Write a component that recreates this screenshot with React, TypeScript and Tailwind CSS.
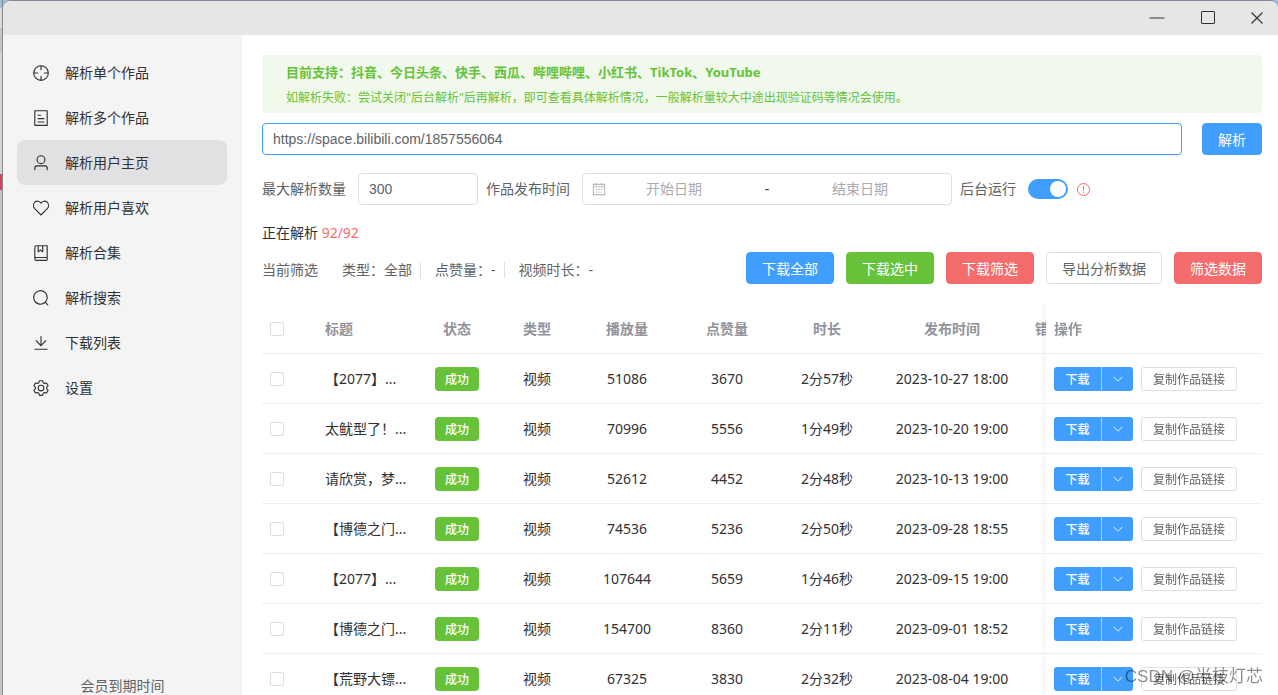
import { useState } from 'react';
import type { ReactNode } from 'react';
import { clsx } from 'clsx';

interface Work {
  title: string;
  plays: number;
  likes: number;
  duration: string;
  publishedAt: string;
}

const works: Work[] = [
  { title: '【2077】...', plays: 51086, likes: 3670, duration: '2分57秒', publishedAt: '2023-10-27 18:00' },
  { title: '太鱿型了！...', plays: 70996, likes: 5556, duration: '1分49秒', publishedAt: '2023-10-20 19:00' },
  { title: '请欣赏，梦...', plays: 52612, likes: 4452, duration: '2分48秒', publishedAt: '2023-10-13 19:00' },
  { title: '【博德之门...', plays: 74536, likes: 5236, duration: '2分50秒', publishedAt: '2023-09-28 18:55' },
  { title: '【2077】...', plays: 107644, likes: 5659, duration: '1分46秒', publishedAt: '2023-09-15 19:00' },
  { title: '【博德之门...', plays: 154700, likes: 8360, duration: '2分11秒', publishedAt: '2023-09-01 18:52' },
  { title: '【荒野大镖...', plays: 67325, likes: 3830, duration: '2分32秒', publishedAt: '2023-08-04 19:00' },
];

const icons = {
  aim: 'M512 896a384 384 0 1 0 0-768 384 384 0 0 0 0 768zm0 64a448 448 0 1 1 0-896 448 448 0 0 1 0 896zM512 96a32 32 0 0 1 32 32v192a32 32 0 0 1-64 0V128a32 32 0 0 1 32-32zm0 576a32 32 0 0 1 32 32v192a32 32 0 1 1-64 0V704a32 32 0 0 1 32-32zM96 512a32 32 0 0 1 32-32h192a32 32 0 0 1 0 64H128a32 32 0 0 1-32-32zm576 0a32 32 0 0 1 32-32h192a32 32 0 1 1 0 64H704a32 32 0 0 1-32-32z',
  tickets:
    'M192 128v768h640V128H192zm-32-64h704a32 32 0 0 1 32 32v832a32 32 0 0 1-32 32H160a32 32 0 0 1-32-32V96a32 32 0 0 1 32-32zm160 448h384v64H320v-64zm0-192h192v64H320v-64zm0 384h384v64H320v-64z',
  user: 'M512 512a192 192 0 1 0 0-384 192 192 0 0 0 0 384zm0 64a256 256 0 1 1 0-512 256 256 0 0 1 0 512zm320 320v-96a96 96 0 0 0-96-96H288a96 96 0 0 0-96 96v96a32 32 0 1 1-64 0v-96a160 160 0 0 1 160-160h448a160 160 0 0 1 160 160v96a32 32 0 1 1-64 0z',
  collection:
    'M192 736h640V128H256a64 64 0 0 0-64 64v544zm64-672h608a32 32 0 0 1 32 32v672a32 32 0 0 1-32 32H160l-32 57.536V192A128 128 0 0 1 256 64zM240 800a48 48 0 1 0 0 96h592v-96H240zm0-64h656v160a64 64 0 0 1-64 64H240a112 112 0 0 1 0-224zm144-608v250.88l96-76.8 96 76.8V128H384zm-64-64h320v381.44a32 32 0 0 1-51.968 24.96L480 384l-108.032 86.4A32 32 0 0 1 320 445.44V64z',
  search:
    'm795.904 750.72 124.992 124.928a32 32 0 0 1-45.248 45.248L750.656 795.904a416 416 0 1 1 45.248-45.248zM480 832a352 352 0 1 0 0-704 352 352 0 0 0 0 704z',
  download:
    'M160 832h704a32 32 0 1 1 0 64H160a32 32 0 1 1 0-64zm384-253.696 236.288-236.352 45.248 45.248L508.8 704 192 387.2l45.248-45.248L480 584.704V128h64v450.304z',
  setting:
    'M600.704 64a32 32 0 0 1 30.464 22.208l35.2 109.376c14.784 7.232 28.928 15.36 42.432 24.512l112.384-24.192a32 32 0 0 1 34.432 15.36L944.32 364.8a32 32 0 0 1-4.032 37.504l-77.12 85.12a357.12 357.12 0 0 1 0 49.024l77.12 85.248a32 32 0 0 1 4.032 37.504l-88.704 153.6a32 32 0 0 1-34.432 15.296L708.8 803.904c-13.44 9.088-27.648 17.28-42.368 24.512l-35.264 109.376A32 32 0 0 1 600.704 960H423.296a32 32 0 0 1-30.464-22.208L357.696 828.48a351.616 351.616 0 0 1-42.56-24.64l-112.32 24.256a32 32 0 0 1-34.432-15.36L79.68 659.2a32 32 0 0 1 4.032-37.504l77.12-85.248a357.12 357.12 0 0 1 0-48.896l-77.12-85.248A32 32 0 0 1 79.68 364.8l88.704-153.6a32 32 0 0 1 34.432-15.296l112.32 24.256c13.568-9.152 27.776-17.408 42.56-24.64l35.2-109.312A32 32 0 0 1 423.232 64H600.64zm-23.424 64H446.72l-36.352 113.088-24.512 11.968a294.113 294.113 0 0 0-34.816 20.096l-22.656 15.36-116.224-25.088-65.28 113.152 79.68 88.192-1.92 27.136a293.12 293.12 0 0 0 0 40.192l1.92 27.136-79.808 88.192 65.344 113.152 116.224-25.024 22.656 15.296a294.113 294.113 0 0 0 34.816 20.096l24.512 11.968L446.72 896h130.688l36.48-113.152 24.448-11.904a288.282 288.282 0 0 0 34.752-20.096l22.592-15.296 116.288 25.024 65.28-113.152-79.744-88.192 1.92-27.136a293.12 293.12 0 0 0 0-40.256l-1.92-27.136 79.808-88.128-65.344-113.152-116.288 24.96-22.592-15.232a287.616 287.616 0 0 0-34.752-20.096l-24.448-11.904L577.344 128zM512 320a192 192 0 1 1 0 384 192 192 0 0 1 0-384zm0 64a128 128 0 1 0 0 256 128 128 0 0 0 0-256z',
  calendar:
    'M128 384v512h768V192H768v32a32 32 0 1 1-64 0v-32H320v32a32 32 0 0 1-64 0v-32H128v128h768v64H128zm192-256h384V96a32 32 0 1 1 64 0v32h160a32 32 0 0 1 32 32v768a32 32 0 0 1-32 32H96a32 32 0 0 1-32-32V160a32 32 0 0 1 32-32h160V96a32 32 0 0 1 64 0v32zm-32 384h64a32 32 0 0 1 0 64h-64a32 32 0 0 1 0-64zm0 192h64a32 32 0 1 1 0 64h-64a32 32 0 1 1 0-64zm192-192h64a32 32 0 0 1 0 64h-64a32 32 0 0 1 0-64zm0 192h64a32 32 0 1 1 0 64h-64a32 32 0 1 1 0-64zm192-192h64a32 32 0 1 1 0 64h-64a32 32 0 1 1 0-64zm0 192h64a32 32 0 1 1 0 64h-64a32 32 0 1 1 0-64z',
  arrowDown:
    'M831.872 340.864 512 652.672 192.128 340.864a30.592 30.592 0 0 0-42.752 0 29.12 29.12 0 0 0 0 41.6L489.664 714.24a32 32 0 0 0 44.672 0l340.288-331.712a29.12 29.12 0 0 0 0-41.728 30.592 30.592 0 0 0-42.752 0z',
};

function Icon({ d, className }: { d: string; className?: string }) {
  return (
    <svg viewBox="0 0 1024 1024" fill="currentColor" className={className} aria-hidden="true">
      <path d={d} />
    </svg>
  );
}

function HeartIcon({ className }: { className?: string }) {
  return (
    <svg viewBox="0 0 18 18" fill="none" stroke="currentColor" strokeWidth="1.1" strokeLinejoin="round" className={className} aria-hidden="true">
      <path d="M9 4.1C7.6 1.9 4.6 1.5 2.8 3.2 1 5 1 7.8 2.7 9.7L9 16l6.3-6.3C17 7.8 17 5 15.2 3.2 13.4 1.5 10.4 1.9 9 4.1z" />
    </svg>
  );
}

const menu: { label: string; icon: ReactNode }[] = [
  { label: '解析单个作品', icon: <Icon d={icons.aim} className="size-[18px]" /> },
  { label: '解析多个作品', icon: <Icon d={icons.tickets} className="size-[18px]" /> },
  { label: '解析用户主页', icon: <Icon d={icons.user} className="size-[18px]" /> },
  { label: '解析用户喜欢', icon: <HeartIcon className="size-[18px]" /> },
  { label: '解析合集', icon: <Icon d={icons.collection} className="size-[18px]" /> },
  { label: '解析搜索', icon: <Icon d={icons.search} className="size-[18px]" /> },
  { label: '下载列表', icon: <Icon d={icons.download} className="size-[18px]" /> },
  { label: '设置', icon: <Icon d={icons.setting} className="size-[18px]" /> },
];

const buttonStyles = {
  primary: 'border-[#409eff] bg-[#409eff] text-white',
  success: 'border-[#67c23a] bg-[#67c23a] text-white',
  danger: 'border-[#f56c6c] bg-[#f56c6c] text-white',
  plain: 'border-[#dcdfe6] bg-white text-[#606266]',
};

function Button({ type = 'plain', children }: { type?: keyof typeof buttonStyles; children: ReactNode }) {
  return (
    <button type="button" className={clsx('h-8 shrink-0 rounded border px-[15px] pt-px text-sm', buttonStyles[type])}>
      {children}
    </button>
  );
}

// Sliver of the desktop that shows beside the window
function DesktopEdge() {
  return (
    <div className="flex w-[3px] shrink-0 flex-col border-r border-[#8b8b8b] bg-[#c3c4c6]" aria-hidden="true">
      <div className="h-2 bg-[#9dbfe2]" />
      <div className="h-5 bg-[#dcdcdc]" />
      <div className="h-6 bg-[#c4c4c4]" />
      <div className="h-[122px] bg-[#d4d4d4]" />
      <div className="h-4 bg-[#d8405f]" />
      <div className="h-8 bg-[#bfc4ca]" />
      <div className="flex-1" />
    </div>
  );
}

function TitleBar() {
  return (
    <header className="flex h-[34px] shrink-0 items-center justify-end bg-[#e6e6e6] text-[#333]">
      <button type="button" aria-label="最小化" className="flex h-full w-[46px] items-center justify-center">
        <svg viewBox="0 0 16 16" className="size-4" stroke="currentColor" fill="none">
          <path d="M.5 8h15" />
        </svg>
      </button>
      <button type="button" aria-label="最大化" className="flex h-full w-14 items-center justify-center">
        <svg viewBox="0 0 16 16" className="size-4" stroke="currentColor" fill="none">
          <rect x="1.5" y="1.5" width="13" height="12" rx="0.5" />
        </svg>
      </button>
      <button type="button" aria-label="关闭" className="flex h-full w-[42px] items-center justify-center">
        <svg viewBox="0 0 16 16" className="size-4" stroke="currentColor" strokeWidth="1.2" fill="none">
          <path d="M2.5 2.500l11 11M13.500 2.500l-11 11" />
        </svg>
      </button>
    </header>
  );
}

function Sidebar() {
  const [active, setActive] = useState('解析用户主页');

  return (
    <aside className="flex w-[239px] shrink-0 flex-col justify-between bg-[#f4f4f4] pt-[15px]">
      <nav className="flex flex-col pr-[15px] pl-[14px]">
        {menu.map((item) => (
          <a
            key={item.label}
            href="#"
            onClick={(e) => {
              e.preventDefault();
              setActive(item.label);
            }}
            className={clsx(
              'flex h-[45px] items-center gap-[15px] rounded-lg px-[15px] text-sm text-[#303133]',
              active === item.label && 'bg-[#e1e1e3]'
            )}
          >
            {item.icon}
            {item.label}
          </a>
        ))}
      </nav>
      <p className="text-center text-sm leading-[18px] text-[#606266]">会员到期时间</p>
    </aside>
  );
}

function SearchForm() {
  const [url, setUrl] = useState('https://space.bilibili.com/1857556064');
  const [limit, setLimit] = useState('300');
  const [background, setBackground] = useState(true);

  return (
    <form className="text-sm text-[#606266]" onSubmit={(e) => e.preventDefault()}>
      <div className="mt-[10px] flex gap-5">
        <input
          type="text"
          aria-label="主页链接"
          value={url}
          onChange={(e) => setUrl(e.target.value)}
          className="h-8 min-w-0 flex-1 rounded border border-[#409eff] px-[10px] font-['Liberation_Sans',sans-serif] outline-none"
        />
        <Button type="primary">解析</Button>
      </div>

      <div className="mt-[18px] flex items-center whitespace-nowrap">
        <label htmlFor="limit">最大解析数量</label>
        <input
          id="limit"
          type="text"
          value={limit}
          onChange={(e) => setLimit(e.target.value)}
          className="mr-2 ml-3 h-8 w-[120px] rounded border border-[#dcdfe6] px-[10px] font-['Liberation_Sans',sans-serif]"
        />
        <label htmlFor="start">作品发布时间</label>
        <div className="mr-2 ml-3 flex h-8 w-[370px] items-center rounded border border-[#dcdfe6] pr-[23px] pl-[9px]">
          <Icon d={icons.calendar} className="size-[14px] text-[#a8abb2]" />
          <input id="start" type="text" placeholder="开始日期" className="w-[136px] text-center placeholder:text-[#a8abb2]" />
          <span className="flex-1 text-center text-[#303133]">-</span>
          <input type="text" aria-label="结束日期" placeholder="结束日期" className="w-[136px] text-center placeholder:text-[#a8abb2]" />
        </div>
        <label htmlFor="background">后台运行</label>
        <input
          id="background"
          type="checkbox"
          role="switch"
          checked={background}
          onChange={(e) => setBackground(e.target.checked)}
          className="mr-2 ml-3 flex h-5 w-10 appearance-none items-center rounded-full bg-[#dcdfe6] px-[2px] before:size-4 before:rounded-full before:bg-white checked:justify-end checked:bg-[#409eff]"
        />
        <svg viewBox="0 0 16 16" fill="none" stroke="#f56c6c" className="size-4">
          <circle cx="7.5" cy="8.5" r="6" />
          <path d="M7.500 5v4.500M7.500 10.700v1.200" />
        </svg>
      </div>
    </form>
  );
}

function Toolbar() {
  return (
    <div className="mt-[9px] flex items-center justify-between whitespace-nowrap">
      <div className="flex items-center pt-1 text-sm text-[#606266]">
        <span className="mr-6">当前筛选</span>
        <span className="border-r border-[#dcdfe6] pr-2 leading-4">类型：全部</span>
        <span className="border-r border-[#dcdfe6] pr-2 pl-[14px] leading-4">点赞量：-</span>
        <span className="pl-[14px] leading-4">视频时长：-</span>
      </div>
      <div className="flex gap-3">
        <Button type="primary">下载全部</Button>
        <Button type="success">下载选中</Button>
        <Button type="danger">下载筛选</Button>
        <Button>导出分析数据</Button>
        <Button type="danger">筛选数据</Button>
      </div>
    </div>
  );
}

function Checkbox({ label }: { label: string }) {
  return (
    <input
      type="checkbox"
      aria-label={label}
      className="block size-[14px] appearance-none rounded-xs border border-[#dcdfe6] bg-white checked:border-[#409eff] checked:bg-[#409eff]"
    />
  );
}

function WorkTable() {
  return (
    <div className="mt-[19px] overflow-hidden">
      <table className="w-full min-w-[1081px] table-fixed border-separate border-spacing-0 text-center text-sm whitespace-nowrap text-[#303133] [&_td]:h-[50px] [&_td]:border-b [&_td]:border-[#ebeef5] [&_td]:px-2 [&_th]:h-[51px] [&_th]:border-b [&_th]:border-[#ebeef5] [&_th]:px-2 [&_th]:pt-[2px]">
        <colgroup>
          <col className="w-[55px]" />
          <col className="w-[100px]" />
          <col className="w-[80px]" />
          <col className="w-[80px]" />
          <col className="w-[100px]" />
          <col className="w-[100px]" />
          <col className="w-[100px]" />
          <col className="w-[150px]" />
          <col />
          <col className="w-[216px]" />
        </colgroup>
        <thead className="text-[#909399]">
          <tr>
            <th>
              <Checkbox label="全选" />
            </th>
            <th className="text-left">标题</th>
            <th>状态</th>
            <th>类型</th>
            <th>播放量</th>
            <th>点赞量</th>
            <th>时长</th>
            <th>发布时间</th>
            <th className="text-left">错误信息</th>
            <th className="sticky right-0 bg-white text-left shadow-[0_0_10px_rgba(0,0,0,0.08)]">操作</th>
          </tr>
        </thead>
        <tbody>
          {works.map((work) => (
            <tr key={work.publishedAt}>
              <td>
                <Checkbox label={work.title} />
              </td>
              <td className="overflow-hidden text-left">{work.title}</td>
              <td>
                <span className="mx-auto flex h-6 w-11 items-center justify-center rounded bg-[#67c23a] pt-[2px] text-xs font-medium text-white">成功</span>
              </td>
              <td>视频</td>
              <td>{work.plays}</td>
              <td>{work.likes}</td>
              <td>{work.duration}</td>
              <td>{work.publishedAt}</td>
              <td />
              <td className="sticky right-0 bg-white shadow-[0_0_10px_rgba(0,0,0,0.08)] [clip-path:inset(0_0_0_-10px)]">
                <div className="flex gap-2 text-xs">
                  <div className="flex h-6 text-white">
                    <button type="button" className="w-12 rounded-l-[3px] border-r border-[#a0cfff] bg-[#409eff] pt-[2px] font-medium">
                      下载
                    </button>
                    <button type="button" aria-label="更多" className="flex w-[31px] items-center justify-center rounded-r-[3px] bg-[#409eff]">
                      <Icon d={icons.arrowDown} className="size-3" />
                    </button>
                  </div>
                  <button type="button" className="h-6 rounded-[3px] border border-[#dcdfe6] px-[11px] pt-[2px] text-[#606266]">
                    复制作品链接
                  </button>
                </div>
              </td>
            </tr>
          ))}
        </tbody>
      </table>
    </div>
  );
}

export default function App() {
  return (
    <div className="relative flex h-screen overflow-hidden bg-[#9dbfe2] font-['Noto_Sans','Noto_Sans_CJK_SC',sans-serif]">
      <DesktopEdge />
      <div className="flex min-w-0 flex-1 flex-col overflow-hidden rounded-t-lg border-t border-[#7f8893] bg-white">
        <TitleBar />
        <div className="flex min-h-0 flex-1">
          <Sidebar />
          <main className="min-w-0 flex-1 overflow-hidden pt-5 pr-4 pl-5">
            <div className="rounded bg-[#f0f9eb] px-6 pt-2 pb-[5px] text-[#67c23a]">
              <p className="text-[13px] leading-[18px] font-bold">目前支持：抖音、今日头条、快手、西瓜、哔哩哔哩、小红书、TikTok、YouTube</p>
              <p className="mt-[7px] text-xs leading-5">如解析失败：尝试关闭"后台解析"后再解析，即可查看具体解析情况，一般解析量较大中途出现验证码等情况会使用。</p>
            </div>
            <SearchForm />
            <p className="mt-[17px] text-sm leading-[21px] text-[#303133]">
              正在解析 <span className="text-[#f56c6c]">92/92</span>
            </p>
            <Toolbar />
            <WorkTable />
          </main>
        </div>
      </div>
      <div className="pointer-events-none absolute right-[15px] bottom-1 font-['Liberation_Sans','Noto_Sans_CJK_SC',sans-serif] text-[17px] leading-7 text-black/45">
        CSDN @半枝灯芯
      </div>
    </div>
  );
}
